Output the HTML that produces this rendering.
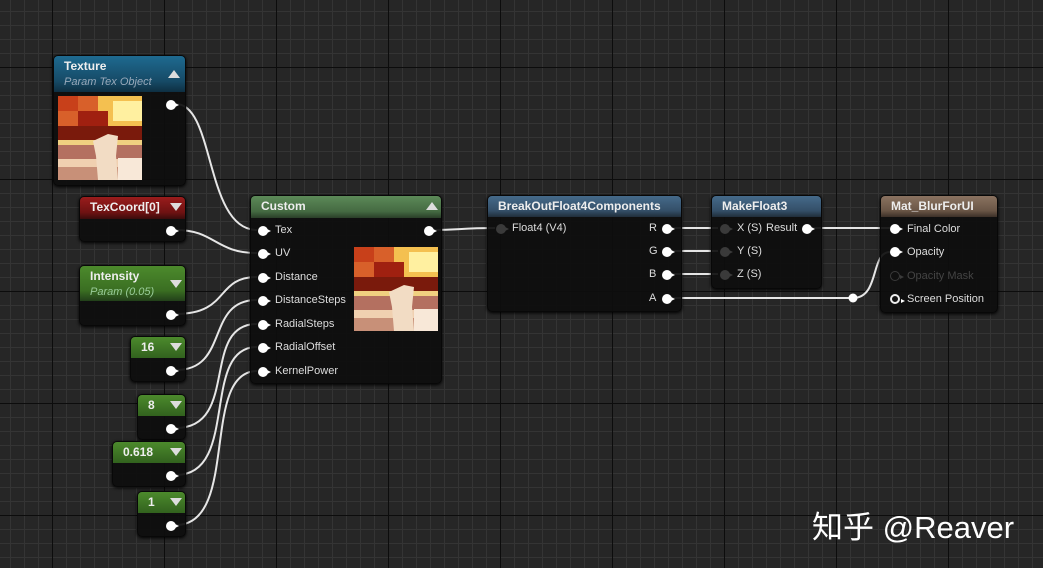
<!DOCTYPE html>
<html><head><meta charset="utf-8"><style>
*{margin:0;padding:0;box-sizing:border-box}
body{width:1043px;height:568px;overflow:hidden;position:relative;background:#262626;font-family:"Liberation Sans","Noto Sans CJK SC",sans-serif;}
.grid{position:absolute;inset:0;
background-image:
linear-gradient(to right,#0c0c0c 0,#0c0c0c 1px,transparent 1px),
linear-gradient(to bottom,#0c0c0c 0,#0c0c0c 1px,transparent 1px),
linear-gradient(to right,#343434 0,#343434 1px,transparent 1px),
linear-gradient(to bottom,#343434 0,#343434 1px,transparent 1px);
background-size:112px 112px,112px 112px,14px 14px,14px 14px;
background-position:52px 0,0 67px,52px 0,0 67px;}
.n{position:absolute;background:rgba(14,14,14,.93);border-radius:5px;box-shadow:0 1px 3px #000;border:1px solid #080808;overflow:hidden}
.h{position:absolute;left:0;right:0;top:0;color:#eee;font-weight:bold;font-size:12px;padding:3px 0 0 10px;}
.sub{font-weight:normal;font-style:italic;color:#9ab;font-size:11px;margin-top:3px}
.t{position:absolute;color:#ddd;font-size:11px;white-space:nowrap}
.p{position:absolute;width:10px;height:10px;border-radius:50%;background:#fff}
.p:after{content:"";position:absolute;left:9px;top:2.5px;border-left:4px solid #fff;border-top:2.5px solid transparent;border-bottom:2.5px solid transparent}
.d{background:#3a3a3a}.d:after{border-left-color:#3a3a3a}
.tri{position:absolute;width:0;height:0;border-left:6px solid transparent;border-right:6px solid transparent}
.up{border-bottom:8px solid #ddd}.dn{border-top:8px solid #ddd}
svg.w{position:absolute;left:0;top:0}
</style></head><body>
<div class="grid"></div>

<svg class="w" width="1043" height="568" fill="none" stroke="#e6e6e6" stroke-width="2">
<path d="M176 104 C215 104,205 230,257 230"/>
<path d="M176 230 C215 230,215 253,257 253"/>
<path d="M176 314 C230 314,215 277,257 277"/>
<path d="M176 370 C230 370,205 300,257 300"/>
<path d="M176 428 C240 428,200 324,257 324"/>
<path d="M176 475 C240 475,200 347,257 347"/>
<path d="M176 525 C240 525,200 371,257 371"/>
<path d="M433 230 C460 230,460 228,495 228"/>
<path d="M670 228 L718 228"/>
<path d="M670 251 L718 251"/>
<path d="M670 274 L718 274"/>
<path d="M670 298 L853 298"/>
<path d="M810 228 L890 228"/>
<path d="M853 298 C880 298,870 252,890 252"/>
<circle cx="853" cy="298" r="4.5" fill="#fff" stroke="none"/>
</svg>

<!-- Texture -->
<div class="n" style="left:53px;top:55px;width:133px;height:131px">
<div class="h" style="height:36px;background:linear-gradient(#1e6a90,#164a66 70%,#0e2f42)">Texture<div class="sub">Param Tex Object</div></div>
<div class="tri up" style="left:114px;top:14px"></div>
<svg style="position:absolute;left:4px;top:40px" width="84" height="84" viewBox="0 0 84 84">
<rect width="84" height="84" fill="#d8602a"/>
<rect x="40" y="0" width="44" height="30" fill="#f4c050"/>
<rect x="55" y="5" width="29" height="20" fill="#fff0a0"/>
<rect x="0" y="0" width="20" height="15" fill="#c8401a"/>
<rect x="20" y="15" width="30" height="15" fill="#a02010"/>
<rect x="0" y="30" width="84" height="16" fill="#7a1a0c"/>
<rect x="0" y="44" width="84" height="5" fill="#f0d080"/>
<rect x="0" y="49" width="84" height="14" fill="#b47060"/>
<rect x="0" y="63" width="84" height="8" fill="#f0d0b0"/>
<rect x="0" y="71" width="84" height="13" fill="#c89078"/>
<path d="M35 45 L50 38 L60 40 L58 60 L60 84 L40 84 L38 60Z" fill="#f2dcc4"/>
<rect x="60" y="62" width="24" height="22" fill="#f8e8d8"/>
</svg>
<div class="p" style="left:112px;top:44px"></div>
</div>

<!-- TexCoord -->
<div class="n" style="left:79px;top:196px;width:107px;height:46px">
<div class="h" style="height:22px;background:linear-gradient(#9a1c1c,#6e1212 70%,#3a0c0c)">TexCoord[0]</div>
<div class="tri dn" style="left:90px;top:6px"></div>
<div class="p" style="left:86px;top:29px"></div>
</div>

<!-- Intensity -->
<div class="n" style="left:79px;top:265px;width:107px;height:61px">
<div class="h" style="height:35px;background:linear-gradient(#4c8a2c,#3a6e22 70%,#22401a)">Intensity<div class="sub" style="color:#9c9">Param (0.05)</div></div>
<div class="tri dn" style="left:90px;top:14px"></div>
<div class="p" style="left:86px;top:44px"></div>
</div>

<!-- constants -->
<div class="n" style="left:130px;top:336px;width:56px;height:46px">
<div class="h" style="height:21px;background:linear-gradient(#4c8a2c,#32621e)">16</div>
<div class="tri dn" style="left:39px;top:6px"></div>
<div class="p" style="left:35px;top:29px"></div>
</div>
<div class="n" style="left:137px;top:394px;width:49px;height:46px">
<div class="h" style="height:21px;background:linear-gradient(#4c8a2c,#32621e)">8</div>
<div class="tri dn" style="left:32px;top:6px"></div>
<div class="p" style="left:28px;top:29px"></div>
</div>
<div class="n" style="left:112px;top:441px;width:74px;height:46px">
<div class="h" style="height:21px;background:linear-gradient(#4c8a2c,#32621e)">0.618</div>
<div class="tri dn" style="left:57px;top:6px"></div>
<div class="p" style="left:53px;top:29px"></div>
</div>
<div class="n" style="left:137px;top:491px;width:49px;height:46px">
<div class="h" style="height:21px;background:linear-gradient(#4c8a2c,#32621e)">1</div>
<div class="tri dn" style="left:32px;top:6px"></div>
<div class="p" style="left:28px;top:29px"></div>
</div>

<!-- Custom -->
<div class="n" style="left:250px;top:195px;width:192px;height:189px">
<div class="h" style="height:22px;background:linear-gradient(#5c8a58,#456a42 70%,#2a3e28)">Custom</div>
<div class="tri up" style="left:175px;top:6px"></div>
<div class="p" style="left:7px;top:30px"></div><div class="t" style="left:24px;top:28px">Tex</div>
<div class="p" style="left:7px;top:53px"></div><div class="t" style="left:24px;top:51px">UV</div>
<div class="p" style="left:7px;top:77px"></div><div class="t" style="left:24px;top:75px">Distance</div>
<div class="p" style="left:7px;top:100px"></div><div class="t" style="left:24px;top:98px">DistanceSteps</div>
<div class="p" style="left:7px;top:124px"></div><div class="t" style="left:24px;top:122px">RadialSteps</div>
<div class="p" style="left:7px;top:147px"></div><div class="t" style="left:24px;top:145px">RadialOffset</div>
<div class="p" style="left:7px;top:171px"></div><div class="t" style="left:24px;top:169px">KernelPower</div>
<div class="p" style="left:173px;top:30px"></div>
<svg style="position:absolute;left:103px;top:51px" width="84" height="84" viewBox="0 0 84 84">
<rect width="84" height="84" fill="#d8602a"/>
<rect x="40" y="0" width="44" height="30" fill="#f4c050"/>
<rect x="55" y="5" width="29" height="20" fill="#fff0a0"/>
<rect x="0" y="0" width="20" height="15" fill="#c8401a"/>
<rect x="20" y="15" width="30" height="15" fill="#a02010"/>
<rect x="0" y="30" width="84" height="16" fill="#7a1a0c"/>
<rect x="0" y="44" width="84" height="5" fill="#f0d080"/>
<rect x="0" y="49" width="84" height="14" fill="#b47060"/>
<rect x="0" y="63" width="84" height="8" fill="#f0d0b0"/>
<rect x="0" y="71" width="84" height="13" fill="#c89078"/>
<path d="M35 45 L50 38 L60 40 L58 60 L60 84 L40 84 L38 60Z" fill="#f2dcc4"/>
<rect x="60" y="62" width="24" height="22" fill="#f8e8d8"/>
</svg>
</div>

<!-- BreakOut -->
<div class="n" style="left:487px;top:195px;width:195px;height:117px">
<div class="h" style="height:21px;background:linear-gradient(#456a8a,#344f68 70%,#202e3a)">BreakOutFloat4Components</div>
<div class="p d" style="left:8px;top:28px"></div><div class="t" style="left:24px;top:26px">Float4 (V4)</div>
<div class="t" style="left:161px;top:26px">R</div><div class="p" style="left:174px;top:28px"></div>
<div class="t" style="left:161px;top:49px">G</div><div class="p" style="left:174px;top:51px"></div>
<div class="t" style="left:161px;top:72px">B</div><div class="p" style="left:174px;top:74px"></div>
<div class="t" style="left:161px;top:96px">A</div><div class="p" style="left:174px;top:98px"></div>
</div>

<!-- MakeFloat3 -->
<div class="n" style="left:711px;top:195px;width:111px;height:94px">
<div class="h" style="height:21px;background:linear-gradient(#456a8a,#344f68 70%,#202e3a)">MakeFloat3</div>
<div class="p d" style="left:8px;top:28px"></div><div class="t" style="left:25px;top:26px">X (S)</div>
<div class="p d" style="left:8px;top:51px"></div><div class="t" style="left:25px;top:49px">Y (S)</div>
<div class="p d" style="left:8px;top:74px"></div><div class="t" style="left:25px;top:72px">Z (S)</div>
<div class="t" style="left:54px;top:26px">Result</div><div class="p" style="left:90px;top:28px"></div>
</div>

<!-- Mat_BlurForUI -->
<div class="n" style="left:880px;top:195px;width:118px;height:118px">
<div class="h" style="height:21px;background:linear-gradient(#8a7260,#6a5646 70%,#3c3028)">Mat_BlurForUI</div>
<div class="p" style="left:9px;top:28px"></div><div class="t" style="left:26px;top:27px">Final Color</div>
<div class="p" style="left:9px;top:51px"></div><div class="t" style="left:26px;top:50px">Opacity</div>
<div class="p d" style="left:9px;top:75px;background:none;border:1.5px solid #3a3a3a"></div><div class="t" style="left:26px;top:74px;color:#444">Opacity Mask</div>
<div class="p" style="left:9px;top:98px;background:#111;border:2px solid #eee"></div><div class="t" style="left:26px;top:97px">Screen Position</div>
</div>

<div style="position:absolute;left:812px;top:502px;color:#fff;font-size:31px;white-space:nowrap;font-family:'Liberation Sans','Noto Sans CJK SC',sans-serif">知乎 @Reaver</div>
</body></html>
